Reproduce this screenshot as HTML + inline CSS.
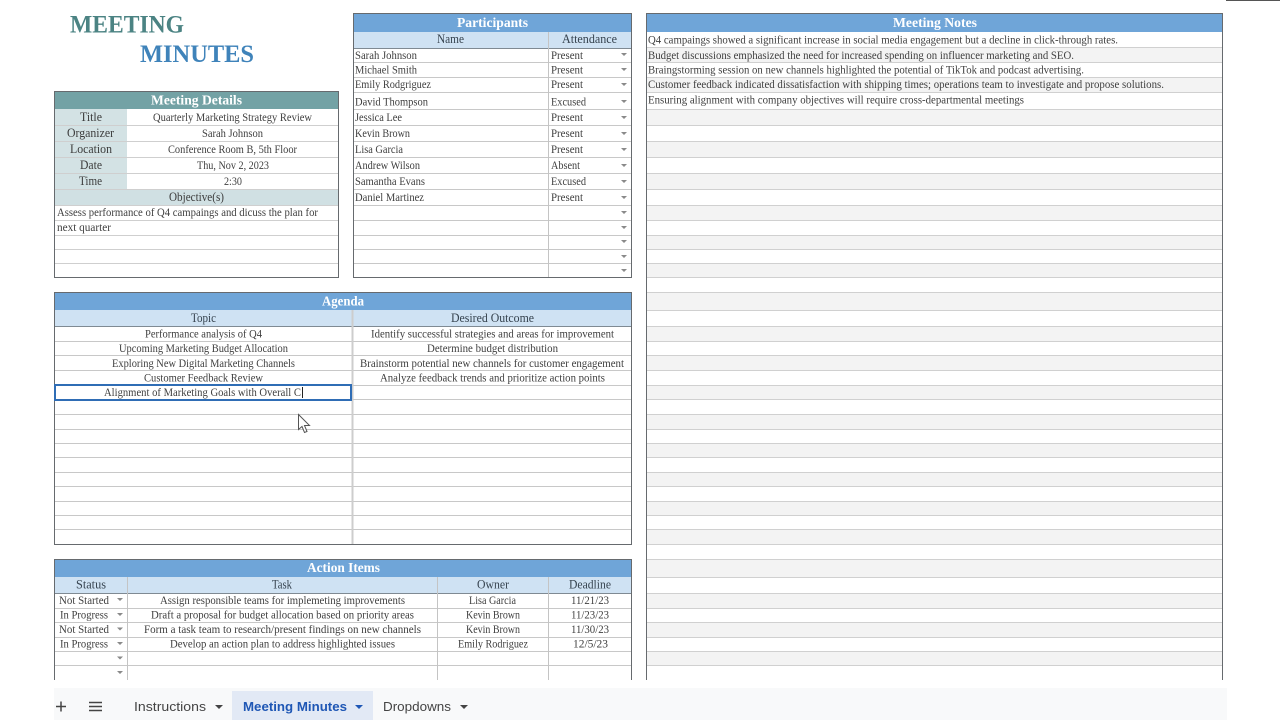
<!DOCTYPE html>
<html lang="en">
<head>
<meta charset="utf-8">
<title>Meeting Minutes</title>
<style>
html,body{margin:0;padding:0;background:#fff;width:1280px;height:720px;overflow:hidden}
svg{display:block;position:absolute;left:0;top:0;filter:blur(0.35px)}
text{font-family:"Liberation Serif",serif;font-size:11.7px;fill:#404040}
.h{font-weight:bold;font-size:13.5px;fill:#fff}
.s{font-size:12.2px;fill:#36434f}
.l{font-size:12.2px;fill:#3c3c3c}
.u{font-family:"Liberation Sans",sans-serif;font-size:13px;fill:#444}
</style>
</head>
<body>
<svg width="1280" height="720" viewBox="0 0 1280 720" xmlns="http://www.w3.org/2000/svg">
<rect x="1226" y="0" width="54" height="1" fill="#555"/>

<!-- Title -->
<text x="70" y="32.5" textLength="114" lengthAdjust="spacingAndGlyphs" style="font-size:25.5px;font-weight:bold;fill:#4b8383">MEETING</text>
<text x="140" y="62" textLength="114" lengthAdjust="spacingAndGlyphs" style="font-size:25.5px;font-weight:bold;fill:#3f83ba">MINUTES</text>

<!-- Fills -->
<g shape-rendering="crispEdges">
<rect x="54" y="91" width="285" height="18" fill="#73a2a5"/>
<rect x="55" y="109" width="72" height="80" fill="#d3e2e4"/>
<rect x="55" y="189" width="283" height="16" fill="#d0e0e3"/>
<rect x="353" y="13" width="279" height="19" fill="#6fa5d8"/>
<rect x="354" y="32" width="277" height="16" fill="#cfe2f3"/>
<rect x="646" y="13" width="577" height="19" fill="#6fa5d8"/>
<rect x="54" y="292" width="578" height="18" fill="#6fa5d8"/>
<rect x="55" y="310" width="576" height="16" fill="#cfe2f3"/>
<rect x="54" y="559" width="578" height="18" fill="#6fa5d8"/>
<rect x="55" y="577" width="576" height="16" fill="#cfe2f3"/>

<!-- Notes alternating rows -->
<g fill="#f3f3f3">
<rect x="647" y="47" width="575" height="15"/>
<rect x="647" y="77" width="575" height="15"/>
<rect x="647" y="109" width="575" height="16"/>
<rect x="647" y="141" width="575" height="16"/>
<rect x="647" y="173" width="575" height="16"/>
<rect x="647" y="205" width="575" height="15"/>
<rect x="647" y="235" width="575" height="14"/>
<rect x="647" y="263" width="575" height="14"/>
<rect x="647" y="292" width="575" height="18"/>
<rect x="647" y="326" width="575" height="15"/>
<rect x="647" y="355" width="575" height="15"/>
<rect x="647" y="385" width="575" height="14"/>
<rect x="647" y="414" width="575" height="15"/>
<rect x="647" y="443" width="575" height="14"/>
<rect x="647" y="472" width="575" height="14"/>
<rect x="647" y="501" width="575" height="14"/>
<rect x="647" y="529" width="575" height="15"/>
<rect x="647" y="559" width="575" height="18"/>
<rect x="647" y="593" width="575" height="15"/>
<rect x="647" y="622" width="575" height="15"/>
<rect x="647" y="651" width="575" height="14"/>
</g>

<!-- Row lines -->
<path fill="none" stroke="#cfcfcf" d="M55 125.5H338M55 141.5H338M55 157.5H338M55 173.5H338M55 189.5H338M55 205.5H338M55 220.5H338M55 235.5H338M55 249.5H338M55 263.5H338"/>
<path fill="none" stroke="#c8c8c8" d="M354 62.5H631M354 77.5H631M354 92.5H631M354 109.5H631M354 125.5H631M354 141.5H631M354 157.5H631M354 173.5H631M354 189.5H631M354 205.5H631M354 220.5H631M354 235.5H631M354 249.5H631M354 263.5H631"/>
<path fill="none" stroke="#c8c8c8" d="M55 341.5H631M55 355.5H631M55 370.5H631M55 385.5H631M55 399.5H631M55 414.5H631M55 429.5H631M55 443.5H631M55 457.5H631M55 472.5H631M55 486.5H631M55 501.5H631M55 515.5H631M55 529.5H631"/>
<path fill="none" stroke="#c8c8c8" d="M55 608.5H631M55 622.5H631M55 637.5H631M55 651.5H631M55 665.5H631"/>
<path fill="none" stroke="#d0d0d0" d="M647 47.5H1222M647 62.5H1222M647 77.5H1222M647 92.5H1222M647 109.5H1222M647 125.5H1222M647 141.5H1222M647 157.5H1222M647 173.5H1222M647 189.5H1222M647 205.5H1222M647 220.5H1222M647 235.5H1222M647 249.5H1222M647 263.5H1222M647 277.5H1222M647 292.5H1222M647 310.5H1222M647 326.5H1222M647 341.5H1222M647 355.5H1222M647 370.5H1222M647 385.5H1222M647 399.5H1222M647 414.5H1222M647 429.5H1222M647 443.5H1222M647 457.5H1222M647 472.5H1222M647 486.5H1222M647 501.5H1222M647 515.5H1222M647 529.5H1222M647 544.5H1222M647 559.5H1222M647 577.5H1222M647 593.5H1222M647 608.5H1222M647 622.5H1222M647 637.5H1222M647 651.5H1222M647 665.5H1222"/>
<path fill="none" stroke="#7f8a93" d="M354 48.5H631M55 326.5H631M55 593.5H631"/>

<!-- Column lines -->
<path fill="none" stroke="#c4c4c4" d="M548.5 32V277M127.5 577V680M437.5 577V680M548.5 577V680"/>
<path fill="none" stroke="#cdcdcd" stroke-width="2" d="M352.5 310V544"/>

<!-- Box borders -->
<g fill="none" stroke="#666a6e">
<rect x="54.5" y="91.5" width="284" height="186"/>
<rect x="353.5" y="13.5" width="278" height="264"/>
<rect x="54.5" y="292.5" width="577" height="252"/>
<path d="M54.5 680V559.5H631.5V680"/>
<path d="M646.5 680V13.5H1222.5V680"/>
</g>

<!-- Selected cell -->
<rect x="55" y="385" width="296" height="15" fill="#fff" stroke="#2f6db5" stroke-width="2"/>

<!-- Bottom bar -->
<rect x="54" y="688" width="1173" height="32" fill="#f8f9fa"/>
<rect x="232" y="691" width="141" height="29" fill="#e2e9f5"/>
</g>

<!-- Meeting Details -->
<text class="h" x="151" y="104.5" textLength="91" lengthAdjust="spacingAndGlyphs">Meeting Details</text>
<text class="l" x="80" y="121" textLength="22" lengthAdjust="spacingAndGlyphs">Title</text>
<text class="l" x="67" y="137" textLength="47" lengthAdjust="spacingAndGlyphs">Organizer</text>
<text class="l" x="70" y="153" textLength="42" lengthAdjust="spacingAndGlyphs">Location</text>
<text class="l" x="80" y="169" textLength="22" lengthAdjust="spacingAndGlyphs">Date</text>
<text class="l" x="79" y="185" textLength="23" lengthAdjust="spacingAndGlyphs">Time</text>
<text class="l" x="169" y="201" textLength="55" lengthAdjust="spacingAndGlyphs">Objective(s)</text>
<text x="153" y="121" textLength="159" lengthAdjust="spacingAndGlyphs">Quarterly Marketing Strategy Review</text>
<text x="202" y="137" textLength="61" lengthAdjust="spacingAndGlyphs">Sarah Johnson</text>
<text x="168" y="153" textLength="129" lengthAdjust="spacingAndGlyphs">Conference Room B, 5th Floor</text>
<text x="197" y="169" textLength="72" lengthAdjust="spacingAndGlyphs">Thu, Nov 2, 2023</text>
<text x="224" y="185" textLength="18" lengthAdjust="spacingAndGlyphs">2:30</text>
<text x="57" y="216" textLength="261" lengthAdjust="spacingAndGlyphs">Assess performance of Q4 campaings and dicuss the plan for</text>
<text x="57" y="231" textLength="54" lengthAdjust="spacingAndGlyphs">next quarter</text>

<!-- Participants -->
<text class="h" x="457" y="27" textLength="71" lengthAdjust="spacingAndGlyphs">Participants</text>
<text class="s" x="437" y="43" textLength="27" lengthAdjust="spacingAndGlyphs">Name</text>
<text class="s" x="562" y="43" textLength="55" lengthAdjust="spacingAndGlyphs">Attendance</text>
<text x="355" y="59" textLength="62" lengthAdjust="spacingAndGlyphs">Sarah Johnson</text>
<text x="355" y="73.5" textLength="62" lengthAdjust="spacingAndGlyphs">Michael Smith</text>
<text x="355" y="88" textLength="76" lengthAdjust="spacingAndGlyphs">Emily Rodgriguez</text>
<text x="355" y="105.5" textLength="73" lengthAdjust="spacingAndGlyphs">David Thompson</text>
<text x="355" y="121" textLength="47" lengthAdjust="spacingAndGlyphs">Jessica Lee</text>
<text x="355" y="137" textLength="55" lengthAdjust="spacingAndGlyphs">Kevin Brown</text>
<text x="355" y="153" textLength="48" lengthAdjust="spacingAndGlyphs">Lisa Garcia</text>
<text x="355" y="169" textLength="65" lengthAdjust="spacingAndGlyphs">Andrew Wilson</text>
<text x="355" y="185" textLength="70" lengthAdjust="spacingAndGlyphs">Samantha Evans</text>
<text x="355" y="201" textLength="69" lengthAdjust="spacingAndGlyphs">Daniel Martinez</text>
<text x="551" y="59" textLength="32" lengthAdjust="spacingAndGlyphs">Present</text>
<text x="551" y="73.5" textLength="32" lengthAdjust="spacingAndGlyphs">Present</text>
<text x="551" y="88" textLength="32" lengthAdjust="spacingAndGlyphs">Present</text>
<text x="551" y="105.5" textLength="35" lengthAdjust="spacingAndGlyphs">Excused</text>
<text x="551" y="121" textLength="32" lengthAdjust="spacingAndGlyphs">Present</text>
<text x="551" y="137" textLength="32" lengthAdjust="spacingAndGlyphs">Present</text>
<text x="551" y="153" textLength="32" lengthAdjust="spacingAndGlyphs">Present</text>
<text x="551" y="169" textLength="29" lengthAdjust="spacingAndGlyphs">Absent</text>
<text x="551" y="185" textLength="35" lengthAdjust="spacingAndGlyphs">Excused</text>
<text x="551" y="201" textLength="32" lengthAdjust="spacingAndGlyphs">Present</text>
<path fill="#8a8a8a" d="M621 53h6l-3 3zM621 68h6l-3 3zM621 83h6l-3 3zM621 100h6l-3 3zM621 116h6l-3 3zM621 132h6l-3 3zM621 148h6l-3 3zM621 164h6l-3 3zM621 180h6l-3 3zM621 196h6l-3 3zM621 211h6l-3 3zM621 226h6l-3 3zM621 240h6l-3 3zM621 255h6l-3 3zM621 269h6l-3 3z"/>

<!-- Notes -->
<text class="h" x="893" y="27" textLength="84" lengthAdjust="spacingAndGlyphs">Meeting Notes</text>
<text x="648" y="43.5" textLength="470" lengthAdjust="spacingAndGlyphs">Q4 campaings showed a significant increase in social media engagement but a decline in click-through rates.</text>
<text x="648" y="59" textLength="426" lengthAdjust="spacingAndGlyphs">Budget discussions emphasized the need for increased spending on influencer marketing and SEO.</text>
<text x="648" y="73.5" textLength="436" lengthAdjust="spacingAndGlyphs">Braingstorming session on new channels highlighted the potential of TikTok and podcast advertising.</text>
<text x="648" y="88" textLength="516" lengthAdjust="spacingAndGlyphs">Customer feedback indicated dissatisfaction with shipping times; operations team to investigate and propose solutions.</text>
<text x="648" y="103.5" textLength="376" lengthAdjust="spacingAndGlyphs">Ensuring alignment with company objectives will require cross-departmental meetings</text>

<!-- Agenda -->
<text class="h" x="322" y="305.5" textLength="42" lengthAdjust="spacingAndGlyphs">Agenda</text>
<text class="s" x="191" y="322" textLength="25" lengthAdjust="spacingAndGlyphs">Topic</text>
<text class="s" x="451" y="322" textLength="83" lengthAdjust="spacingAndGlyphs">Desired Outcome</text>
<text x="145" y="337.5" textLength="117" lengthAdjust="spacingAndGlyphs">Performance analysis of Q4</text>
<text x="119" y="352" textLength="169" lengthAdjust="spacingAndGlyphs">Upcoming Marketing Budget Allocation</text>
<text x="112" y="367" textLength="183" lengthAdjust="spacingAndGlyphs">Exploring New Digital Marketing Channels</text>
<text x="144" y="381.5" textLength="119" lengthAdjust="spacingAndGlyphs">Customer Feedback Review</text>
<text x="104" y="396" textLength="197" lengthAdjust="spacingAndGlyphs">Alignment of Marketing Goals with Overall C</text>
<rect x="302" y="387" width="1" height="11" fill="#222"/>
<text x="371" y="337.5" textLength="243" lengthAdjust="spacingAndGlyphs">Identify successful strategies and areas for improvement</text>
<text x="427" y="352" textLength="131" lengthAdjust="spacingAndGlyphs">Determine budget distribution</text>
<text x="360" y="367" textLength="264" lengthAdjust="spacingAndGlyphs">Brainstorm potential new channels for customer engagement</text>
<text x="380" y="381.5" textLength="225" lengthAdjust="spacingAndGlyphs">Analyze feedback trends and prioritize action points</text>

<!-- Cursor -->
<path d="M298.5 414.5V429.5L302 426.5L304.5 432.5L307 431.5L304.5 425.5H309.5Z" fill="#fff" stroke="#555" stroke-width="1"/>

<!-- Action Items -->
<text class="h" x="307" y="572" textLength="73" lengthAdjust="spacingAndGlyphs">Action Items</text>
<text class="s" x="76" y="588.5" textLength="30" lengthAdjust="spacingAndGlyphs">Status</text>
<text class="s" x="272" y="588.5" textLength="20" lengthAdjust="spacingAndGlyphs">Task</text>
<text class="s" x="477" y="588.5" textLength="32" lengthAdjust="spacingAndGlyphs">Owner</text>
<text class="s" x="569" y="588.5" textLength="42" lengthAdjust="spacingAndGlyphs">Deadline</text>
<text x="59" y="604" textLength="50" lengthAdjust="spacingAndGlyphs">Not Started</text>
<text x="60" y="618.5" textLength="48" lengthAdjust="spacingAndGlyphs">In Progress</text>
<text x="59" y="633" textLength="50" lengthAdjust="spacingAndGlyphs">Not Started</text>
<text x="60" y="647.5" textLength="48" lengthAdjust="spacingAndGlyphs">In Progress</text>
<path fill="#8a8a8a" d="M117 598h6l-3 3zM117 613h6l-3 3zM117 627.5h6l-3 3zM117 642h6l-3 3zM117 656.5h6l-3 3zM117 671h6l-3 3z"/>
<text x="160" y="604" textLength="245" lengthAdjust="spacingAndGlyphs">Assign responsible teams for implemeting improvements</text>
<text x="151" y="618.5" textLength="263" lengthAdjust="spacingAndGlyphs">Draft a proposal for budget allocation based on priority areas</text>
<text x="144" y="633" textLength="277" lengthAdjust="spacingAndGlyphs">Form a task team to research/present findings on new channels</text>
<text x="170" y="647.5" textLength="225" lengthAdjust="spacingAndGlyphs">Develop an action plan to address highlighted issues</text>
<text x="469" y="604" textLength="47" lengthAdjust="spacingAndGlyphs">Lisa Garcia</text>
<text x="466" y="618.5" textLength="54" lengthAdjust="spacingAndGlyphs">Kevin Brown</text>
<text x="466" y="633" textLength="54" lengthAdjust="spacingAndGlyphs">Kevin Brown</text>
<text x="458" y="647.5" textLength="70" lengthAdjust="spacingAndGlyphs">Emily Rodriguez</text>
<text x="571" y="604" textLength="38" lengthAdjust="spacingAndGlyphs">11/21/23</text>
<text x="571" y="618.5" textLength="38" lengthAdjust="spacingAndGlyphs">11/23/23</text>
<text x="571" y="633" textLength="38" lengthAdjust="spacingAndGlyphs">11/30/23</text>
<text x="573" y="647.5" textLength="35" lengthAdjust="spacingAndGlyphs">12/5/23</text>

<!-- Sheet tabs -->
<path fill="none" stroke="#444" stroke-width="1.5" d="M56 706.5H66M61 701.5V711.5"/>
<path fill="none" stroke="#444" stroke-width="1.5" d="M89 702.5H102M89 706.5H102M89 710.5H102"/>
<text class="u" x="134" y="711" textLength="72" lengthAdjust="spacingAndGlyphs">Instructions</text>
<path fill="#444" d="M215 705h8l-4 4z"/>
<text class="u" x="243" y="711" textLength="104" lengthAdjust="spacingAndGlyphs" style="font-weight:bold;fill:#1f57b5">Meeting Minutes</text>
<path fill="#1f57b5" d="M355 705h8l-4 4z"/>
<text class="u" x="383" y="711" textLength="68" lengthAdjust="spacingAndGlyphs">Dropdowns</text>
<path fill="#444" d="M460 705h8l-4 4z"/>
</svg>
</body>
</html>
